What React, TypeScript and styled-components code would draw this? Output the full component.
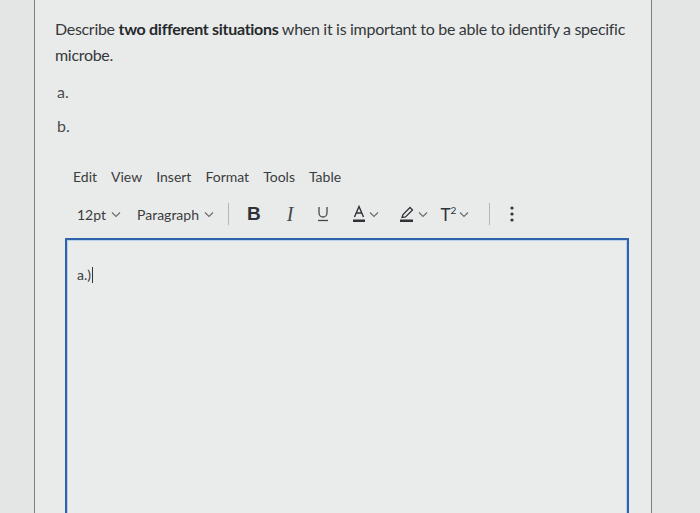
import styled, { createGlobalStyle } from 'styled-components';

const GlobalStyle = createGlobalStyle`
  html, body {
    margin: 0;
    padding: 0;
    background: #e4e6e5;
    overflow: hidden;
  }
  body {
    font-family: Lato, 'Open Sans', sans-serif;
    color: #34373a;
  }
`;

const Page = styled.div`
  width: 700px;
  height: 513px;
  padding-left: 34px;
  box-sizing: border-box;
  overflow: hidden;
`;

const Card = styled.div`
  width: 618px;
  height: 100%;
  box-sizing: border-box;
  border-left: 1px solid #7d8083;
  border-right: 1px solid #7d8083;
  background: #e9ebea;
  padding: 16px 0 0 20px;
`;

const Question = styled.p`
  margin: 0;
  font-size: 16px;
  letter-spacing: -0.3px;
  line-height: 26px;
  color: #35383b;
  width: 585px;

  strong {
    font-weight: 700;
    color: #26292c;
  }
`;

const Answer = styled.p`
  margin: 0;
  font-size: 16px;
  line-height: 24px;
  color: #4a4d50;
  padding-left: 2px;
`;

const AnswerList = styled.div`
  display: flex;
  flex-direction: column;
  gap: 10px;
  margin-top: 12px;
`;

const Editor = styled.div`
  margin-top: 27px;
  padding-left: 10px;
  width: 564px;
`;

const MenuBar = styled.div`
  display: flex;
  gap: 14px;
  padding-left: 8px;
  font-size: 14px;
  color: #3a3d40;
  height: 22px;
  align-items: center;
`;

const Toolbar = styled.div`
  display: flex;
  align-items: center;
  height: 36px;
  margin-top: 9px;
  padding-left: 12px;
  font-size: 14px;
  color: #3a3d40;
`;

const Drop = styled.span<{ $w?: number }>`
  display: inline-flex;
  align-items: center;
  gap: 5px;
  margin-right: ${(p) => p.$w ?? 0}px;
`;

const Sep = styled.span<{ $l: number; $r: number }>`
  width: 1px;
  height: 22px;
  background: #b4b7b9;
  margin: 0 ${(p) => p.$r}px 0 ${(p) => p.$l}px;
`;

const Btn = styled.span<{ $gap?: number }>`
  display: inline-flex;
  align-items: center;
  gap: 3px;
  margin-right: ${(p) => p.$gap ?? 16}px;
  color: #2f3236;
`;

const BoldB = styled.span`
  font-family: 'Liberation Sans', Arial, sans-serif;
  font-weight: 700;
  font-size: 19px;
`;

const ItalicI = styled.span`
  font-family: 'Liberation Serif', serif;
  font-style: italic;
  font-size: 20px;
  color: #45484b;
`;

const Box = styled.div`
  margin-top: 6px;
  height: 300px;
  border: 2px solid #2f62a8;
  border-bottom: none;
  box-shadow: inset 0 0 0 1px #b9d0ea;
  background: #eaeceb;
  padding: 26px 10px;
  font-size: 14px;
  color: #3a3d40;
`;

const Caret = styled.span`
  display: inline-block;
  width: 1px;
  height: 16px;
  background: #333;
  vertical-align: -3px;
  margin-left: 1px;
`;

const Sup = styled.span`
  font-size: 17px;
  color: #2f3236;

  sup {
    font-size: 10px;
  }
`;

const Chevron = () => (
  <svg width="10" height="7" viewBox="0 0 10 7" fill="none">
    <path d="M1 1.5 5 5.5 9 1.5" stroke="#6b6e71" strokeWidth="1.2" />
  </svg>
);

const TextColorIcon = () => (
  <svg width="14" height="18" viewBox="0 0 14 18" fill="none">
    <path d="M2.5 12 7 1.5 11.5 12M4.2 8h5.6" stroke="#2f3236" strokeWidth="1.4" />
    <rect x="1" y="14.5" width="12" height="2.5" fill="#2f3236" />
  </svg>
);

const HighlightIcon = () => (
  <svg width="16" height="18" viewBox="0 0 16 18" fill="none">
    <path d="M3 12.5 4 9.5 11 2.5 13.5 5 6.5 12 3 12.5Z" stroke="#2f3236" strokeWidth="1.3" />
    <rect x="1" y="14.5" width="13" height="2.5" fill="#2f3236" />
  </svg>
);

const UnderlineIcon = () => (
  <svg width="14" height="18" viewBox="0 0 14 18" fill="none">
    <path d="M3 2v6a4 4 0 0 0 8 0V2" stroke="#45484b" strokeWidth="1.3" />
    <path d="M2 15.5h10" stroke="#45484b" strokeWidth="1.3" />
  </svg>
);

const More = () => (
  <svg width="4" height="16" viewBox="0 0 4 16">
    <circle cx="2" cy="2" r="1.6" fill="#2f3236" />
    <circle cx="2" cy="8" r="1.6" fill="#2f3236" />
    <circle cx="2" cy="14" r="1.6" fill="#2f3236" />
  </svg>
);

export default function App() {
  return (
    <>
      <GlobalStyle />
      <Page>
        <Card>
          <Question>
            Describe <strong>two different situations</strong> when it is important to be able to
            identify a specific microbe.
          </Question>
          <AnswerList>
            <Answer>a.</Answer>
            <Answer>b.</Answer>
          </AnswerList>
          <Editor>
            <MenuBar>
              <span>Edit</span>
              <span>View</span>
              <span>Insert</span>
              <span>Format</span>
              <span>Tools</span>
              <span>Table</span>
            </MenuBar>
            <Toolbar>
              <Drop $w={16}>
                12pt <Chevron />
              </Drop>
              <Drop>
                Paragraph <Chevron />
              </Drop>
              <Sep $l={14} $r={18} />
              <Btn $gap={26}>
                <BoldB>B</BoldB>
              </Btn>
              <Btn $gap={23}>
                <ItalicI>I</ItalicI>
              </Btn>
              <Btn $gap={22}>
                <UnderlineIcon />
              </Btn>
              <Btn $gap={20}>
                <TextColorIcon />
                <Chevron />
              </Btn>
              <Btn $gap={12}>
                <HighlightIcon />
                <Chevron />
              </Btn>
              <Btn $gap={0}>
                <Sup>
                  T<sup>2</sup>
                </Sup>
                <Chevron />
              </Btn>
              <Sep $l={20} $r={20} />
              <Btn $gap={0}>
                <More />
              </Btn>
            </Toolbar>
            <Box>
              a.)
              <Caret />
            </Box>
          </Editor>
        </Card>
      </Page>
    </>
  );
}
